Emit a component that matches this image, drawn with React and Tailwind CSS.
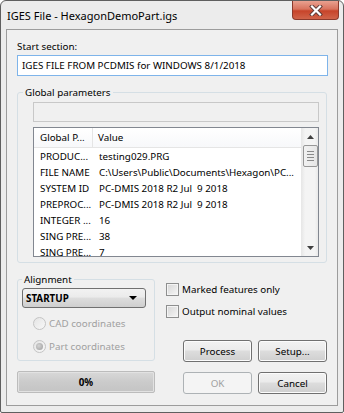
import React from "react";

const btn =
  "h-[22px] w-[69px] rounded-[3px] border border-[#707070] bg-[linear-gradient(#f2f2f2_0%,#ebebeb_45%,#dddddd_50%,#cfcfcf_100%)] shadow-[inset_0_0_0_1px_#fcfcfc] flex items-center justify-center text-black";

const rows = [
  ["PRODUC...", "testing029.PRG"],
  ["FILE NAME", "C:\\Users\\Public\\Documents\\Hexagon\\PC..."],
  ["SYSTEM ID", "PC-DMIS 2018 R2 Jul  9 2018"],
  ["PREPROC...", "PC-DMIS 2018 R2 Jul  9 2018"],
  ["INTEGER ...", "16"],
  ["SING PRE...", "38"],
  ["SING PRE...", "7"],
];

function CloseGlyph() {
  return (
    <svg width="14" height="11" viewBox="0 0 14 11">
      <path d="M3 1.5 L11 9.5 M11 1.5 L3 9.5" stroke="#5a3a36" strokeWidth="4" strokeLinecap="square" />
      <path d="M3 1.5 L11 9.5 M11 1.5 L3 9.5" stroke="#ffffff" strokeWidth="2.2" strokeLinecap="square" />
    </svg>
  );
}

function Checkbox({ label }) {
  return (
    <div className="flex items-center h-[14px]">
      <div className="w-[13px] h-[13px] border border-[#8e8f8f] bg-[linear-gradient(135deg,#d6d6d6,#f6f6f6)] shadow-[inset_0_0_0_1px_#f4f4f4]" />
      <span className="ml-[3px] whitespace-nowrap">{label}</span>
    </div>
  );
}

function Radio({ label, checked }) {
  return (
    <div className="flex items-center h-[14px] text-[#a0a0a0]">
      <div className="w-[13px] h-[13px] rounded-full border border-[#c4c4c4] bg-[linear-gradient(135deg,#e4e4e4,#f8f8f8)] flex items-center justify-center">
        {checked && <div className="w-[7px] h-[7px] rounded-full bg-[radial-gradient(circle_at_40%_40%,#d4d4d4,#9c9c9c)]" />}
      </div>
      <span className="ml-[3px] whitespace-nowrap">{label}</span>
    </div>
  );
}

export default function App() {
  return (
    <div className="w-[344px] h-[413px] bg-white font-['Noto_Sans',Arial,sans-serif] text-[9.8px] leading-[13px] text-black">
      <div className="relative w-[344px] h-[413px] rounded-t-[6px] rounded-b-[2px] border border-[#5f5f5f] bg-[#ececec] flex flex-col px-[5px] pb-[6px]">
        <div className="h-[28px] flex items-center pl-[1px] text-[11px] text-black">
          IGES File - HexagonDemoPart.igs
        </div>
        <div className="absolute top-0 right-[4px] w-[47px] h-[19px] rounded-b-[4px] border border-t-0 border-[#8b3a2c] bg-[linear-gradient(#e9a190_0%,#d8735e_45%,#c7442a_55%,#d0644a_100%)] flex items-center justify-center">
          <CloseGlyph />
        </div>

        <div className="flex-1 border border-[#9c9c9c] bg-[#f0f0f0] flex flex-col px-[10px] pt-[10px]">
          <div className="h-[13px] whitespace-nowrap">Start section:</div>
          <div className="mt-[2px] w-[311px] h-[21px] border border-[#7eb4ea] bg-white flex items-center pl-[4px] whitespace-nowrap">
            IGES FILE FROM PCDMIS for WINDOWS 8/1/2018
          </div>

          <fieldset className="mt-[10px] w-[310px] border border-[#d5dfe5] rounded-[3px] px-[5px] pb-[5px]">
            <legend className="px-[2px] h-[13px] whitespace-nowrap">Global parameters</legend>
            <div className="ml-[10px] w-[286px] mt-[3px] h-[20px] border border-[#c8c8c8] bg-[#f0f0f0]" />
            <div className="ml-[10px] w-[286px] mt-[5px] h-[130px] border border-[#828790] bg-white flex overflow-hidden">
              <div className="flex-1 flex flex-col overflow-hidden">
                <div className="h-[20px] shrink-0 flex items-center border-b border-[#e5e5e5] bg-[linear-gradient(#ffffff,#f7f8fa)]">
                  <div className="w-[59px] h-full flex items-center pl-[6px] border-r border-[#e5e5e5] whitespace-nowrap">Global P...</div>
                  <div className="pl-[5px] whitespace-nowrap">Value</div>
                </div>
                {rows.map(([a, b], i) => (
                  <div key={i} className="h-[16px] shrink-0 flex items-center whitespace-pre">
                    <div className="w-[59px] shrink-0 pl-[6px]">{a}</div>
                    <div className="pl-[6px]">{b}</div>
                  </div>
                ))}
              </div>
              <div className="w-[17px] shrink-0 border-l border-[#e8e8e8] bg-[linear-gradient(90deg,#e9e9e9,#f4f4f4_20%,#f4f4f4_80%,#e9e9e9)] flex flex-col items-center">
                <div className="h-[17px] w-full flex items-center justify-center">
                  <svg width="7" height="4" viewBox="0 0 7 4"><path d="M0 4 L3.5 0 L7 4 Z" fill="#404040" /></svg>
                </div>
                <div className="w-[15px] h-[22px] rounded-[2px] border border-[#979797] bg-[linear-gradient(90deg,#f2f2f2,#e6e6e6)] flex flex-col items-center justify-center gap-[2px]">
                  <div className="w-[7px] h-[1px] bg-[#8a8a8a]" />
                  <div className="w-[7px] h-[1px] bg-[#8a8a8a]" />
                  <div className="w-[7px] h-[1px] bg-[#8a8a8a]" />
                  <div className="w-[7px] h-[1px] bg-[#8a8a8a]" />
                </div>
                <div className="flex-1" />
                <div className="h-[17px] w-full flex items-center justify-center">
                  <svg width="7" height="4" viewBox="0 0 7 4"><path d="M0 0 L7 0 L3.5 4 Z" fill="#404040" /></svg>
                </div>
              </div>
            </div>
          </fieldset>

          <div className="mt-[10px] flex">
            <div className="w-[138px] flex flex-col">
              <fieldset className="border border-[#d5dfe5] rounded-[3px] px-[4px] pb-[8px] h-[88px]">
                <legend className="px-[2px] h-[13px] whitespace-nowrap">Alignment</legend>
                <div className="mt-[2px] w-[124px] h-[20px] rounded-[3px] border border-[#707070] bg-[linear-gradient(#f2f2f2_0%,#ebebeb_45%,#dddddd_50%,#cfcfcf_100%)] flex items-center pl-[3px] pr-[8px]">
                  <span className="font-bold flex-1">STARTUP</span>
                  <svg width="8" height="4" viewBox="0 0 8 4"><path d="M0 0 L8 0 L4 4 Z" fill="#000" /></svg>
                </div>
                <div className="ml-[11px] mt-[8px] flex flex-col gap-[9px]">
                  <Radio label="CAD coordinates" />
                  <Radio label="Part coordinates" checked />
                </div>
              </fieldset>
              <div className="mt-[10px] h-[22px] rounded-[2px] border border-[#bcbcbc] bg-[linear-gradient(#d8d8d8,#cbcbcb_50%,#c4c4c4)] shadow-[inset_0_0_0_1px_#e2e2e2] flex items-center justify-center font-bold">
                0%
              </div>
            </div>

            <div className="ml-[11px] flex-1 flex flex-col pt-[9px]">
              <Checkbox label="Marked features only" />
              <div className="mt-[8px]"><Checkbox label="Output nominal values" /></div>
              <div className="mt-[22px] ml-[17px] flex gap-[6px]">
                <div className={btn}>Process</div>
                <div className={btn}>Setup...</div>
              </div>
              <div className="mt-[10px] ml-[17px] flex gap-[6px]">
                <div className="h-[22px] w-[69px] rounded-[3px] border border-[#adb2b5] bg-[#f4f4f4] flex items-center justify-center text-[#a0a0a0]">OK</div>
                <div className={btn}>Cancel</div>
              </div>
            </div>
          </div>
        </div>
      </div>
    </div>
  );
}
